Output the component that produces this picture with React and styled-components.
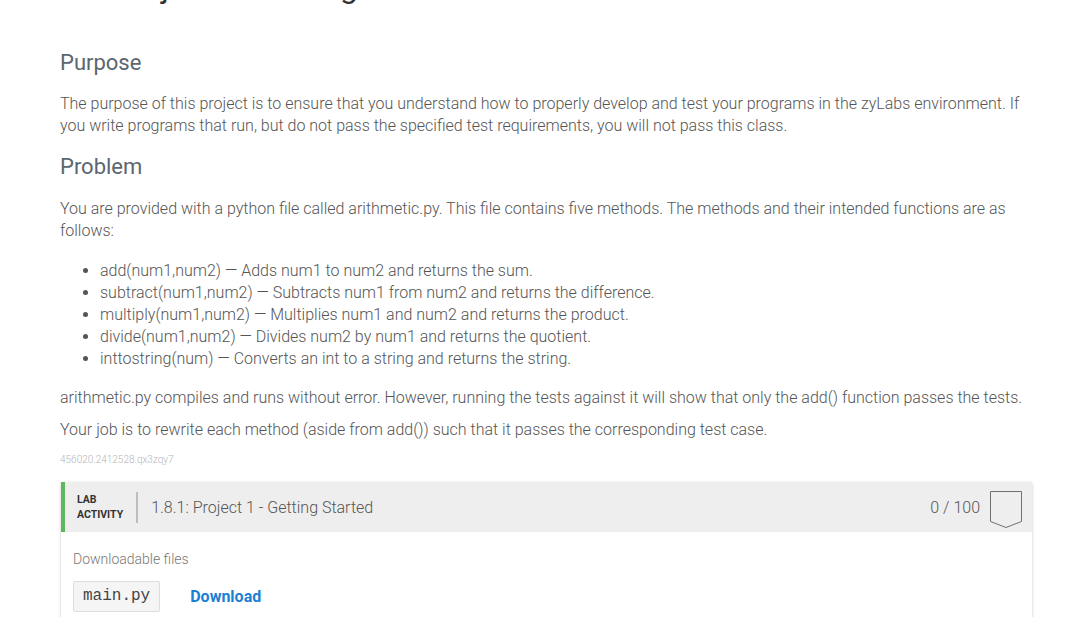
import React from "react";
import styled, { createGlobalStyle } from "styled-components";

const GlobalStyle = createGlobalStyle`
  html, body {
    margin: 0;
    padding: 0;
    background: #ffffff;
    overflow: hidden;
  }
  body {
    font-family: Roboto, "Liberation Sans", sans-serif;
    color: #555555;
  }
`;

const Page = styled.div`
  width: 972px;
  padding-left: 60px;
  display: flex;
  flex-direction: column;
`;

const Title = styled.h1`
  margin: -33px 0 43px;
  font-size: 32px;
  line-height: 40px;
  font-weight: 400;
  color: #333333;
  white-space: nowrap;
`;

const Heading = styled.h3`
  margin: 0 0 ${({ $gap }) => ($gap === undefined ? 17 : $gap)}px;
  font-size: 22px;
  line-height: 26px;
  font-weight: 400;
  color: #5b6670;
`;

const Para = styled.p`
  margin: 0 0 ${({ $gap }) => ($gap === undefined ? 10 : $gap)}px;
  font-size: 16px;
  line-height: 22px;
  font-weight: 300;
  color: #555555;
`;

const List = styled.ul`
  margin: 8px 0 17px;
  padding-left: 40px;
  list-style: disc;
`;

const Item = styled.li`
  font-size: 16px;
  line-height: 22px;
  font-weight: 300;
  color: #555555;
`;

const RefId = styled.div`
  margin: 2px 0 15px;
  font-size: 10px;
  line-height: 14px;
  font-weight: 300;
  color: #b5b5b5;
`;

const Card = styled.div`
  margin-left: 1px;
  width: 971px;
  background: #ffffff;
  box-shadow: 0 1px 3px rgba(0, 0, 0, 0.22);
`;

const CardHeader = styled.div`
  display: flex;
  align-items: center;
  height: 50px;
  padding: 0 10px 0 12px;
  background: #eeeeee;
  border-left: 4px solid #5cb85c;
`;

const Label = styled.div`
  font-size: 10.5px;
  line-height: 15px;
  font-weight: 700;
  color: #333333;
  text-transform: uppercase;
`;

const Divider = styled.div`
  width: 2px;
  height: 31px;
  margin: 0 13px;
  background: #bdbdbd;
`;

const CardTitle = styled.div`
  flex: 1;
  font-size: 16px;
  font-weight: 300;
  color: #555555;
`;

const Score = styled.div`
  margin-right: 10px;
  font-size: 16px;
  font-weight: 300;
  color: #555555;
`;

const Badge = styled.svg`
  display: block;
  margin-top: 6px;
`;

const CardBody = styled.div`
  padding: 17px 12px 6px;
`;

const Caption = styled.div`
  font-size: 14px;
  line-height: 20px;
  font-weight: 300;
  color: #777777;
`;

const FileRow = styled.div`
  display: flex;
  align-items: center;
  gap: 30px;
  margin-top: 12px;
`;

const FileName = styled.div`
  padding: 6px 9px;
  border: 1px solid #dddddd;
  border-radius: 2px;
  background: #f5f5f5;
  font-family: "Liberation Mono", "Courier New", monospace;
  font-size: 16px;
  line-height: 17px;
  color: #444444;
`;

const DownloadLink = styled.a`
  font-size: 16px;
  font-weight: 700;
  color: #1b7fd3;
  text-decoration: none;
`;

const methods = [
  "add(num1,num2) \u2014 Adds num1 to num2 and returns the sum.",
  "subtract(num1,num2) \u2014 Subtracts num1 from num2 and returns the difference.",
  "multiply(num1,num2) \u2014 Multiplies num1 and num2 and returns the product.",
  "divide(num1,num2) \u2014 Divides num2 by num1 and returns the quotient.",
  "inttostring(num) \u2014 Converts an int to a string and returns the string.",
];

export default function App() {
  return (
    <>
      <GlobalStyle />
      <Page>
        <Title>1.8 Project 1: Getting Started</Title>

        <Heading>Purpose</Heading>
        <Para $gap={17}>
          The purpose of this project is to ensure that you understand how to properly develop and
          test your programs in the zyLabs environment. If you write programs that run, but do not
          pass the specified test requirements, you will not pass this class.
        </Para>

        <Heading $gap={18}>Problem</Heading>
        <Para>
          You are provided with a python file called arithmetic.py. This file contains five methods.
          The methods and their intended functions are as follows:
        </Para>
        <List>
          {methods.map((m) => (
            <Item key={m}>{m}</Item>
          ))}
        </List>
        <Para>
          arithmetic.py compiles and runs without error. However, running the tests against it will
          show that only the add() function passes the tests.
        </Para>
        <Para>
          Your job is to rewrite each method (aside from add()) such that it passes the
          corresponding test case.
        </Para>
        <RefId>456020.2412528.qx3zqy7</RefId>

        <Card>
          <CardHeader>
            <Label>
              Lab
              <br />
              Activity
            </Label>
            <Divider />
            <CardTitle>1.8.1: Project 1 - Getting Started</CardTitle>
            <Score>0 / 100</Score>
            <Badge width="32" height="38" viewBox="0 0 32 38">
              <path
                d="M0.5 0.5 H31.5 V30.5 L16 36.5 L0.5 30.5 Z"
                fill="none"
                stroke="#707070"
                strokeWidth="1"
              />
            </Badge>
          </CardHeader>
          <CardBody>
            <Caption>Downloadable files</Caption>
            <FileRow>
              <FileName>main.py</FileName>
              <DownloadLink href="#">Download</DownloadLink>
            </FileRow>
          </CardBody>
        </Card>
      </Page>
    </>
  );
}
